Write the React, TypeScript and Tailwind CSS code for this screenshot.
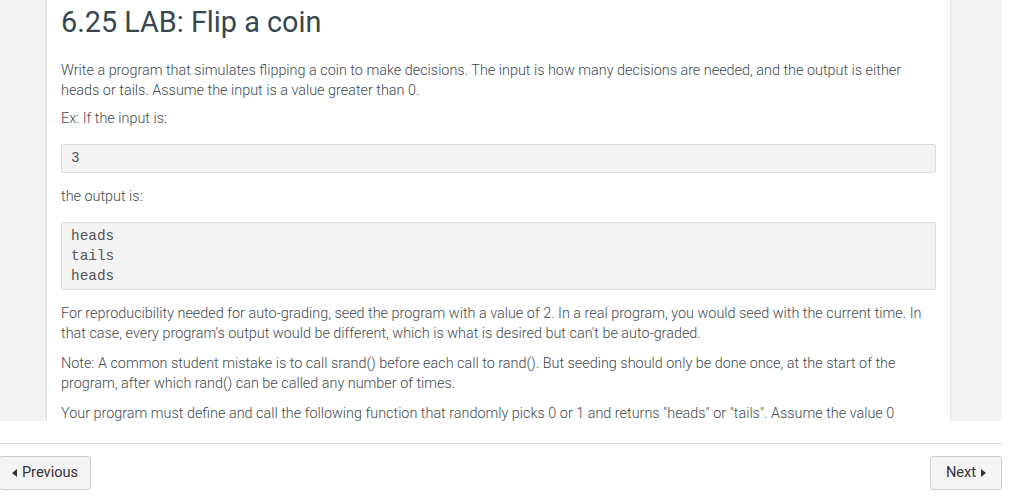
import React from "react";

const bodyFont = { fontFamily: "Roboto, 'Noto Sans', sans-serif" };
const monoFont = { fontFamily: "'Liberation Mono', 'Courier New', monospace" };

function Tri({ dir }: { dir: "left" | "right" }) {
  return (
    <svg width="5" height="8" viewBox="0 0 5 8" className="inline-block">
      {dir === "left" ? (
        <polygon points="5,0 5,8 0,4" fill="currentColor" />
      ) : (
        <polygon points="0,0 0,8 5,4" fill="currentColor" />
      )}
    </svg>
  );
}

export default function App() {
  return (
    <div className="w-[1024px] h-[502px] bg-white overflow-hidden" style={bodyFont}>
      <div className="flex h-[421px] overflow-hidden">
        <div className="w-[47px] shrink-0 bg-[#f3f3f3] shadow-[inset_-2px_0_2px_-1px_rgba(0,0,0,0.06)]" />
        <div className="w-[903px] shrink-0 bg-white pl-[14px] pr-[14px] shadow-[0_-1px_3px_rgba(0,0,0,0.08)]">
          <h1 className="mt-[5px] text-[28.8px] leading-[34px] font-normal text-[#37474f]">
            6.25 LAB: Flip a coin
          </h1>
          <div className="mt-[22px] text-[14.4px] leading-[20px] font-light text-[#3f4a50]">
            <p>
              Write a program that simulates flipping a coin to make decisions. The input is how many decisions are
              needed, and the output is either heads or tails. Assume the input is a value greater than 0.
            </p>
            <p className="mt-[8px]">Ex: If the input is:</p>
            <pre className="mt-[15px] h-[29px] border border-[#dcdcdc] rounded-[2px] bg-[#f3f3f3] px-[9px] pt-[3px] text-[14.4px] leading-[20px] text-[#555] font-normal" style={monoFont}>
              3
            </pre>
            <p className="mt-[14px]">the output is:</p>
            <pre className="mt-[15px] h-[68px] border border-[#dcdcdc] rounded-[2px] bg-[#f3f3f3] px-[9px] pt-[3px] text-[14.4px] leading-[20px] text-[#555] font-normal" style={monoFont}>
{`heads
tails
heads`}
            </pre>
            <p className="mt-[14px]">
              For reproducibility needed for auto-grading, seed the program with a value of 2. In a real program, you
              would seed with the current time. In that case, every program's output would be different, which is what
              is desired but can't be auto-graded.
            </p>
            <p className="mt-[10px]">
              Note: A common student mistake is to call srand() before each call to rand(). But seeding should only be
              done once, at the start of the program, after which rand() can be called any number of times.
            </p>
            <p className="mt-[10px]">
              Your program must define and call the following function that randomly picks 0 or 1 and returns "heads" or
              "tails". Assume the value 0 represents "heads" and 1 represents "tails".
            </p>
          </div>
        </div>
        <div className="w-[52px] shrink-0 bg-[#f3f3f3] shadow-[inset_2px_0_2px_-1px_rgba(0,0,0,0.07)]" />
        <div className="flex-1 bg-white" />
      </div>
      <div className="mt-[22px] w-[1002px] border-t border-[#d6d6d6]" />
      <div className="mt-[12px] w-[1002px] flex justify-between">
        <button className="ml-[-1px] h-[34px] w-[92px] flex items-center justify-center gap-[5px] rounded-[3px] border border-[#cfcfcf] bg-[#f4f4f4] text-[14.6px] text-[#333]">
          <Tri dir="left" />
          <span>Previous</span>
        </button>
        <button className="h-[34px] w-[72px] flex items-center justify-center gap-[5px] rounded-[3px] border border-[#cfcfcf] bg-[#f4f4f4] text-[14.6px] text-[#333]">
          <span>Next</span>
          <Tri dir="right" />
        </button>
      </div>
    </div>
  );
}
